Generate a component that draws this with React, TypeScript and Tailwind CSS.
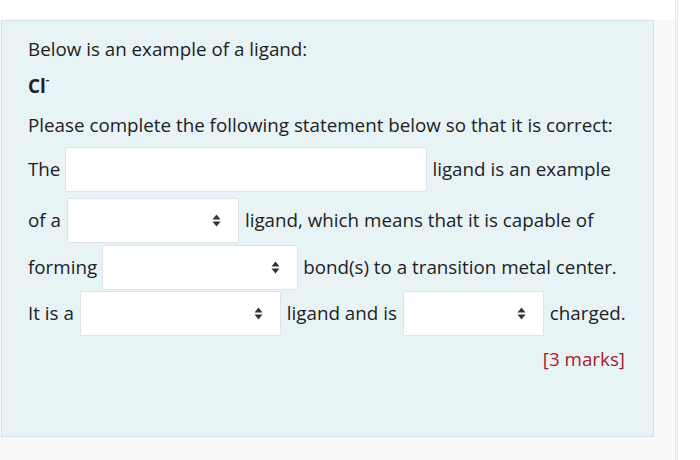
const Caret = () => (
    <svg width="9" height="13" viewBox="0 0 9 13" className="shrink-0">
        <path d="M4.5 0.5 L8.5 5.5 L0.5 5.5 Z" fill="#2f353a" />
        <path d="M4.5 12.5 L8.5 7.5 L0.5 7.5 Z" fill="#2f353a" />
    </svg>
);

const Select = ({ width }: { width: string }) => (
    <div className={`${width} h-[45px] bg-white border border-[#dfe4e8] rounded-[2px] flex items-center justify-end pr-[17px] shrink-0`}>
        <Caret />
    </div>
);

export default function App() {
    return (
        <div className="w-[700px] h-[460px] bg-[#f9f9f9] relative overflow-hidden text-[#1d2125] text-[18.8px] font-['Open_Sans',sans-serif]">
            {/* right-hand divider */}
            <div className="absolute left-[675px] top-0 h-full w-[2px] bg-white border-l border-[#e6e6e6]" />
            <div className="absolute left-[677px] top-0 h-full w-[23px] bg-white border-l border-[#e3e3e3]" />
            <div className="bg-white h-[20px] w-[675px]" />

            <div className="ml-[1px] w-[653px] h-[417px] bg-[#e7f3f5] border border-[#cfe2e7] pl-[26px] pr-[16px] pt-[15px]">
                <p className="leading-[27px]">Below is an example of a ligand:</p>
                <p className="mt-[10px] font-bold leading-[27px]">
                    Cl<sup className="text-[11px] top-[-0.9em]">-</sup>
                </p>
                <p className="mt-[12px] leading-[27px]">Please complete the following statement below so that it is correct:</p>

                <div className="mt-[8px] flex items-center gap-[5px] h-[45px]">
                    <span>The</span>
                    <div className="w-[362px] h-[45px] bg-white border border-[#dfe4e8] rounded-[2px] shrink-0" />
                    <span>ligand is an example</span>
                </div>

                <div className="mt-[6px] flex items-center gap-[6px] h-[45px]">
                    <span>of a</span>
                    <Select width="w-[172px]" />
                    <span>ligand, which means that it is capable of</span>
                </div>

                <div className="mt-[2px] flex items-center gap-[5px] h-[45px]">
                    <span>forming</span>
                    <Select width="w-[196px]" />
                    <span>bond(s) to a transition metal center.</span>
                </div>

                <div className="mt-[1px] flex items-center gap-[6px] h-[45px]">
                    <span>It is a</span>
                    <Select width="w-[201px]" />
                    <span>ligand and is</span>
                    <Select width="w-[141px]" />
                    <span>charged.</span>
                </div>

                <p className="mt-[10px] w-[597px] text-right text-[#a8202e] leading-[27px]">[3 marks]</p>
            </div>
        </div>
    );
}
